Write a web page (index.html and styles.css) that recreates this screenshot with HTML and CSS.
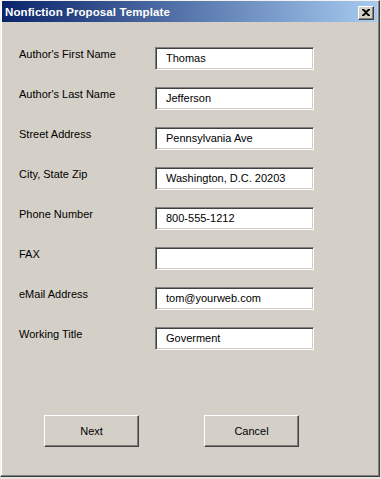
FILE: index.html
```html
<!DOCTYPE html>
<html>
<head>
<meta charset="utf-8">
<link rel="stylesheet" href="styles.css">
</head>
<body>
<div class="window">
  <div class="titlebar">
    <span class="title">Nonfiction Proposal Template</span>
    <span class="close">
      <svg width="8" height="7" viewBox="0 0 8 7"><path d="M0 0h2l2 2 2-2h2v1L5 3.5 8 6v1H6L4 5 2 7H0V6l3-2.5L0 1z" fill="#000"/></svg>
    </span>
  </div>
  <div class="form">
    <div class="row"><span class="label">Author's First Name</span><span class="field">Thomas</span></div>
    <div class="row"><span class="label">Author's Last Name</span><span class="field">Jefferson</span></div>
    <div class="row"><span class="label">Street Address</span><span class="field">Pennsylvania Ave</span></div>
    <div class="row"><span class="label">City, State Zip</span><span class="field">Washington, D.C. 20203</span></div>
    <div class="row"><span class="label">Phone Number</span><span class="field">800-555-1212</span></div>
    <div class="row"><span class="label">FAX</span><span class="field"></span></div>
    <div class="row"><span class="label">eMail Address</span><span class="field">tom@yourweb.com</span></div>
    <div class="row"><span class="label">Working Title</span><span class="field">Goverment</span></div>
  </div>
  <div class="buttons">
    <span class="btn">Next</span>
    <span class="btn">Cancel</span>
  </div>
</div>
</body>
</html>
```
FILE: styles.css
```css
html, body {
  margin: 0;
  padding: 0;
  background: #e6e4de;
}
body {
  font-family: "Liberation Sans", Arial, sans-serif;
  font-size: 11px;
  color: #000;
}
.window {
  box-sizing: border-box;
  width: 380px;
  height: 477px;
  background: #d4d0c8;
  border-top: 1px solid #f4f2ee;
  border-left: 1px solid #f4f2ee;
  border-right: 1px solid #404040;
  border-bottom: 1px solid #404040;
  box-shadow: inset -1px -1px 0 #808080, inset 1px 0 0 #ffffff;
  padding: 0 2px 0 1px;
  display: flex;
  flex-direction: column;
}
.titlebar {
  height: 21px;
  background: linear-gradient(to right, #0a246a, #a6caf0);
  display: flex;
  align-items: center;
  justify-content: space-between;
  padding: 0 3px 0 3px;
}
.title {
  color: #fff;
  font-weight: bold;
  font-size: 11.5px;
  letter-spacing: 0.1px;
}
.close {
  box-sizing: border-box;
  width: 16px;
  height: 14px;
  margin-top: 2px;
  background: #d4d0c8;
  border-top: 1px solid #fff;
  border-left: 1px solid #fff;
  border-right: 1px solid #404040;
  border-bottom: 1px solid #404040;
  box-shadow: inset -1px -1px 0 #808080;
  display: flex;
  align-items: center;
  justify-content: center;
}
.form {
  display: flex;
  flex-direction: column;
  gap: 17px;
  padding: 25px 0 0 17px;
}
.row {
  display: flex;
  align-items: flex-start;
  height: 23px;
}
.label {
  width: 136px;
  padding-top: 1px;
}
.field {
  box-sizing: border-box;
  width: 159px;
  height: 23px;
  background: #fff;
  border-top: 1px solid #808080;
  border-left: 1px solid #808080;
  border-right: 1px solid #fff;
  border-bottom: 1px solid #fff;
  box-shadow: inset 1px 1px 0 #404040, inset -1px -1px 0 #d4d0c8;
  padding: 0 0 0 10px;
  display: flex;
  align-items: center;
  line-height: 1;
}
.buttons {
  display: flex;
  gap: 65px;
  padding: 65px 0 0 42px;
}
.btn {
  box-sizing: border-box;
  width: 95px;
  height: 32px;
  border-top: 1px solid #fff;
  border-left: 1px solid #fff;
  border-right: 1px solid #404040;
  border-bottom: 1px solid #404040;
  box-shadow: inset -1px -1px 0 #808080;
  display: flex;
  align-items: center;
  justify-content: center;
}
```
